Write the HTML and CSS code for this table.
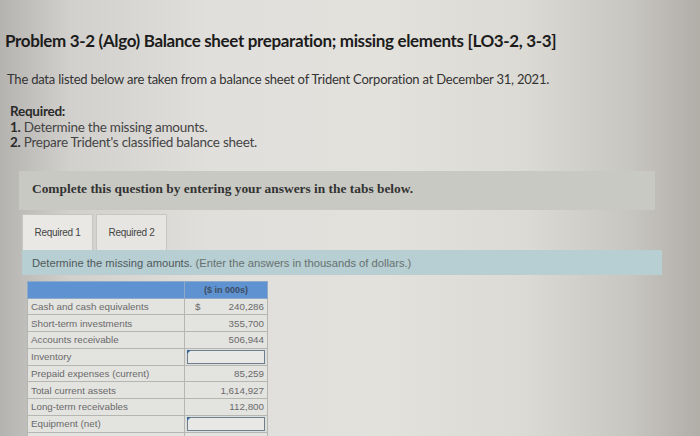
FILE: index.html
```html
<!DOCTYPE html>
<html>
<head>
<meta charset="utf-8">
<link rel="stylesheet" href="styles.css">
</head>
<body>
<div class="page">
  <h1 class="title">Problem 3-2 (Algo) Balance sheet preparation; missing elements [LO3-2, 3-3]</h1>
  <p class="intro">The data listed below are taken from a balance sheet of Trident Corporation at December 31, 2021.</p>
  <div class="required">
    <div class="req-head">Required:</div>
    <div class="req-item"><b>1.</b> Determine the missing amounts.</div>
    <div class="req-item"><b>2.</b> Prepare Trident's classified balance sheet.</div>
  </div>
  <div class="complete">Complete this question by entering your answers in the tabs below.</div>
  <div class="tabs">
    <div class="tab active">Required 1</div>
    <div class="tab">Required 2</div>
  </div>
  <div class="instr">Determine the missing amounts. <span class="note">(Enter the answers in thousands of dollars.)</span></div>
  <table class="sheet">
    <tr class="head"><th class="lbl"></th><th class="amt">($ in 000s)</th></tr>
    <tr><td class="lbl">Cash and cash equivalents</td><td class="amt"><span class="cur">$</span>240,286</td></tr>
    <tr><td class="lbl">Short-term investments</td><td class="amt">355,700</td></tr>
    <tr><td class="lbl">Accounts receivable</td><td class="amt">506,944</td></tr>
    <tr><td class="lbl">Inventory</td><td class="amt input"><span class="box"></span></td></tr>
    <tr><td class="lbl">Prepaid expenses (current)</td><td class="amt">85,259</td></tr>
    <tr><td class="lbl">Total current assets</td><td class="amt">1,614,927</td></tr>
    <tr><td class="lbl">Long-term receivables</td><td class="amt">112,800</td></tr>
    <tr><td class="lbl">Equipment (net)</td><td class="amt input"><span class="box"></span></td></tr>
    <tr><td class="lbl">Total assets</td><td class="amt">2,111,715</td></tr>
  </table>
</div>
</body>
</html>
```
FILE: styles.css
```css
html, body {
  margin: 0;
  padding: 0;
  height: 436px;
  overflow: hidden;
}
body {
  background: linear-gradient(90deg, #b5b3b0 0%, #d2d0cd 10%, #e1dfdc 30%, #e3e1dc 55%, #dcdad4 75%, #c8c6c0 90%, #b1aea8 100%);
  font-family: "Lato", "Liberation Sans", sans-serif;
  color: #2a2a2a;
}
.page {
  padding: 31px 0 0 5px;
}
.title {
  margin: 0;
  font-size: 17px;
  font-weight: 700;
  color: #1c1c1c;
  letter-spacing: -0.35px;
  line-height: 20px;
}
.intro {
  margin: 20px 0 0 2px;
  font-size: 13px;
  line-height: 16px;
  letter-spacing: -0.22px;
  color: #333;
}
.required {
  margin: 17px 0 0 5px;
  font-size: 13.5px;
  line-height: 15.5px;
  color: #444;
  letter-spacing: -0.25px;
}
.req-head {
  font-weight: 700;
  color: #2a2a2a;
}
.req-item b {
  color: #2a2a2a;
}
.complete {
  margin: 20px 0 0 14px;
  width: 636px;
  height: 39px;
  box-sizing: border-box;
  padding: 10px 0 0 13px;
  background: #c9c9c3;
  font-family: "Liberation Serif", serif;
  font-weight: 700;
  font-size: 13.4px;
  color: #333;
}
.tabs {
  display: flex;
  gap: 3px;
  margin: 4px 0 0 17px;
  height: 36px;
}
.tab {
  width: 71px;
  box-sizing: border-box;
  border: 1px solid #c6c6c2;
  border-bottom: none;
  background: #e6e5e1;
  font-family: "Liberation Sans", sans-serif;
  font-size: 10px;
  color: #444;
  text-align: center;
  padding-top: 12px;
  letter-spacing: -0.3px;
}
.tab.active {
  background: #e9e8e4;
}
.instr {
  margin: 0 0 0 17px;
  width: 640px;
  height: 25px;
  box-sizing: border-box;
  padding: 7px 0 0 10px;
  background: #b7ced2;
  font-family: "Liberation Sans", sans-serif;
  font-size: 11.2px;
  color: #505a5c;
}
.instr .note {
  color: #66716f;
}
.sheet {
  margin: 6px 0 0 22px;
  border-collapse: collapse;
  font-family: "Liberation Sans", sans-serif;
  font-size: 9.8px;
  color: #6a6a6a;
}
.sheet td, .sheet th {
  border: 1px solid #b5b5b2;
  height: 16.7px;
  padding: 0 3px;
  box-sizing: border-box;
  background: #e3e3e0;
}
.sheet .head th {
  background: #5f92d0;
  height: 17px;
  color: #3d4d62;
  font-weight: 700;
  font-size: 9px;
  text-align: center;
  border-color: #8fa9c6;
}
.sheet .lbl {
  width: 157px;
  text-align: left;
}
.sheet .amt {
  width: 83px;
  text-align: right;
  position: relative;
}
.sheet .cur {
  position: absolute;
  left: 10px;
}
.sheet td.input {
  padding: 1px 2px;
  background: #dededb;
}
.sheet .box {
  display: block;
  height: 12px;
  border: 1.5px solid #6e7f8f;
  background: #e8e8e6;
  position: relative;
}
.sheet .box::before {
  content: "";
  position: absolute;
  left: -1px;
  top: -1px;
  border-left: 4px solid #3e6a9a;
  border-bottom: 4px solid transparent;
}
```
